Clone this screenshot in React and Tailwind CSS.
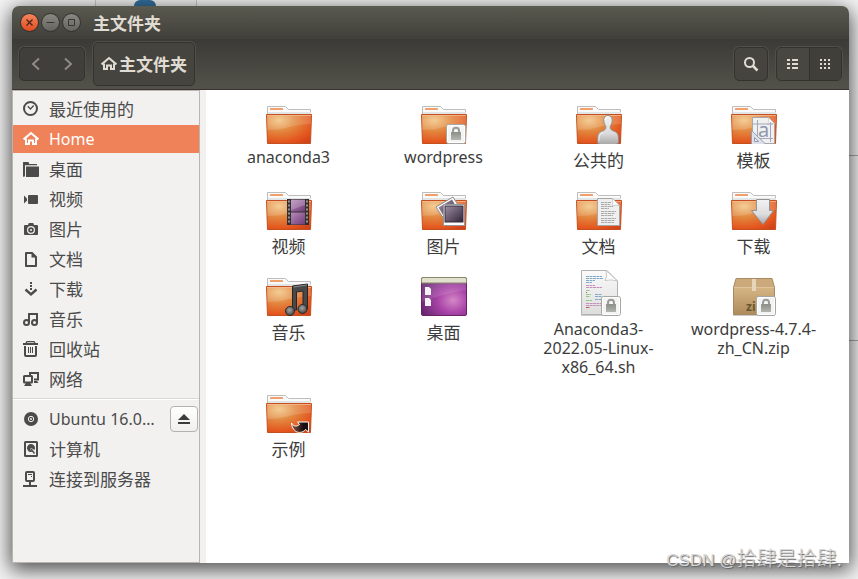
const CJK = "font-['Noto_Sans','Noto_Sans_CJK_SC',sans-serif]";

function HomeIcon() {
  return (
    <svg width="16" height="16" viewBox="0 0 16 16" fill="none" stroke="currentColor" strokeWidth="2">
      <path d="M.6 8.4 8 2l7.400 6.400" />
      <path d="M3 7.500V13h3V9.500h4V13h3V7.500" />
    </svg>
  );
}

const placeIcons = {
  recent: (
    <g fill="none" stroke="currentColor">
      <circle cx="7.500" cy="7.500" r="6.500" strokeWidth="2" />
      <path d="M4.800 5.200 7.500 8l3.200-3.500" strokeWidth="1.300" />
    </g>
  ),
  desktop: (
    <g fill="currentColor">
      <path d="M0 1.500Q0 1 .5 1H5.500l.8 2H14v1.200H2V15H0Z" />
      <path d="M3 5.500h13V15q0 1-1 1H3Z" />
      <path d="M0 14h1.500v2H1q-1 0-1-1Z" />
    </g>
  ),
  video: (
    <g fill="currentColor">
      <rect x="5" y="4" width="10" height="9" rx="1" />
      <path d="M1 4.500 4 7.500v2L1 12.500Z" />
    </g>
  ),
  camera: (
    <g fill="currentColor">
      <path fillRule="evenodd" d="M2 4h3l.8-2h4.400L11 4h3q1 0 1 1v8q0 1-1 1H2q-1 0-1-1V5q0-1 1-1ZM8 5a4 4 0 1 0 0 8 4 4 0 0 0 0-8Z" />
      <path fillRule="evenodd" d="M8 6.200a2.800 2.800 0 1 0 0 5.600 2.800 2.800 0 0 0 0-5.600ZM8 8a1 1 0 1 1 0 2 1 1 0 0 1 0-2Z" />
    </g>
  ),
  document: (
    <g>
      <path d="M3 2h6l4 4v9H3Z" fill="none" stroke="currentColor" strokeWidth="2" strokeLinejoin="round" />
      <path d="M8.500 2v4.500H13Z" fill="currentColor" />
    </g>
  ),
  download: (
    <g fill="none" stroke="currentColor" strokeWidth="2">
      <path d="M8 1v2M8 4v2M8 7v2" />
      <path d="M2.500 8.500 8 13.500l5.500-5" strokeWidth="2.400" />
    </g>
  ),
  music: (
    <g fill="none" stroke="currentColor" strokeWidth="2">
      <circle cx="3.500" cy="11.500" r="2.500" />
      <circle cx="11.500" cy="11.500" r="2.500" />
      <path d="M6 11.500V3h8v8.500" />
    </g>
  ),
  trash: (
    <g fill="none" stroke="currentColor">
      <path d="M0 3h15" strokeWidth="2" />
      <path d="M3 2 4 .700h7L12 2" strokeWidth="1.300" />
      <path d="M2 5v9q0 1 1 1h9q1 0 1-1V5" strokeWidth="2" />
      <path d="M5.500 6v6M7.500 6v6M9.500 6v6" />
    </g>
  ),
  network: (
    <g>
      <path d="M7 4V2h8v6.500h-4" fill="none" stroke="currentColor" strokeWidth="2" />
      <path d="M11 10h3l1.500 2H11Z" fill="currentColor" />
      <rect x="1" y="5" width="8" height="6.500" rx=".5" fill="none" stroke="currentColor" strokeWidth="2" />
      <path d="M3 12h4l2 3H1Z" fill="currentColor" />
    </g>
  ),
  disc: (
    <g>
      <circle cx="8" cy="8" r="7" fill="currentColor" />
      <circle cx="8" cy="8" r="2.700" fill="none" stroke="#f2f1f0" strokeWidth="1" />
      <circle cx="8" cy="8" r="1" fill="#f2f1f0" />
    </g>
  ),
  computer: (
    <g>
      <rect x="2" y="1" width="12" height="14" rx=".5" fill="none" stroke="currentColor" strokeWidth="2" />
      <path d="M8 3a4 4 0 1 0 1.200 7.800L7 8.200 8.200 7 11.500 9A4 4 0 0 0 8 3Z" fill="currentColor" />
      <path d="m8 8 3.500 4.500" stroke="currentColor" strokeWidth="1.500" />
    </g>
  ),
  server: (
    <g fill="none" stroke="currentColor" strokeWidth="2">
      <rect x="3" y="1" width="8" height="9" rx="1" />
      <path d="M7 10v5M0 15h14" />
      <path d="M5 3.500h4M8 5.500h1" strokeWidth="1" />
    </g>
  ),
};

const places = [
  { name: "最近使用的", icon: "recent" },
  { name: "Home", icon: "home", active: true },
  { name: "桌面", icon: "desktop" },
  { name: "视频", icon: "video" },
  { name: "图片", icon: "camera" },
  { name: "文档", icon: "document" },
  { name: "下载", icon: "download" },
  { name: "音乐", icon: "music" },
  { name: "回收站", icon: "trash" },
  { name: "网络", icon: "network" },
];

const devices = [
  { name: "Ubuntu 16.0…", icon: "disc", eject: true },
  { name: "计算机", icon: "computer" },
  { name: "连接到服务器", icon: "server" },
];

function isLatin(name) {
  return !/[\u4e00-\u9fff]/.test(name);
}

function Place({ place }) {
  return (
    <li className={`flex h-7 items-center ${place.active ? "bg-[#f08259] text-white" : "text-[#4b4b4b]"}`}>
      <a href="#" className="flex min-w-0 flex-1 items-center gap-[10px] pl-[10px]">
        {place.icon === "home" ? (
          <HomeIcon />
        ) : (
          <svg width="16" height="16" viewBox="0 0 16 16" className="shrink-0">
            {placeIcons[place.icon]}
          </svg>
        )}
        <span className={`leading-6 whitespace-nowrap ${isLatin(place.name) ? "text-[16px]" : "pt-[2px] text-[17px]"}`}>{place.name}</span>
      </a>
      {place.eject && (
        <button
          aria-label="弹出"
          className="mr-px flex h-[26px] w-7 shrink-0 items-center justify-center rounded border border-[#b5b2ae] bg-linear-to-b from-white to-[#f0efed]"
        >
          <svg width="12" height="12" viewBox="0 0 12 12" fill="#3c3c3c">
            <path d="M6 1 12 7H0Z" />
            <path d="M0 9h12v2H0Z" />
          </svg>
        </button>
      )}
    </li>
  );
}

// emblems share the 48px icon's coordinates
function Lock() {
  return (
    <g>
      <rect x="26.500" y="24.500" width="19" height="19" rx="2" fill="#f4f4f4" stroke="#a5a5a2" />
      <rect x="27.500" y="25.500" width="17" height="17" rx="1" fill="none" stroke="#fff" />
      <path d="M33 33v-2.200a3 3 0 0 1 6 0V33" fill="none" stroke="#999b96" strokeWidth="2" />
      <rect x="31" y="32" width="10" height="8" rx=".5" fill="url(#lock)" />
    </g>
  );
}

const emblems = {
  lock: <Lock />,
  person: (
    <g fill="url(#silver)" stroke="#90908e">
      <path d="M33 15.500c-3 0-4.500 2.500-4.200 5.500.2 2.600 1.400 4 2 5.500.3 2.500-.8 3.500-3.300 4.500-3.500 1.300-5 3-5 8v3.500c0 1.500 4 2.500 10.500 2.500s10.500-1 10.500-2.500V39c0-5-1.500-6.700-5-8-2.500-1-3.600-2-3.300-4.500.6-1.500 1.800-2.900 2-5.500.3-3-1.200-5.500-4.200-5.500Z" />
      <path d="M24 41v-2c0-4 1.500-5.500 4-6.500M30 20c0-2 1-3.500 3-3.500" fill="none" stroke="#fff" strokeOpacity=".7" />
    </g>
  ),
  template: (
    <g>
      <path d="M22.500 17.500h16l6 6v20h-22Z" fill="#f0f0f0" stroke="#a7a7a7" />
      <path d="M38.500 17.500q1 5-1 6.500 4-1 7-.5Z" fill="#fff" stroke="#c2c2c2" strokeWidth=".7" />
      <path d="M27.500 20v20M40.500 22v20M23 24h20M27 38.500h16" stroke="#a2a8bb" />
      <text x="28" y="37" fill="#8f97ad" fontSize="20" fontFamily="Noto Sans">a</text>
      <path fillRule="evenodd" d="M21.500 30.500 36 44.500H21.500ZM24.500 37.500v4h4Z" fill="#dce0ea" stroke="#969caf" />
    </g>
  ),
  film: (
    <g>
      <rect x="22" y="13" width="22" height="26" fill="#32302f" />
      <rect x="26" y="13.500" width="14" height="12" fill="url(#frame)" />
      <rect x="26" y="26.500" width="14" height="12" fill="url(#frame)" />
      <path d="M24 14.500v24M42 14.500v24" stroke="#969492" strokeWidth="2" strokeDasharray="2 2" />
      <path d="M26 14h14v5L26 24Z" fill="#fff" opacity=".2" />
    </g>
  ),
  photos: (
    <g>
      <path d="m16 21 17-10 12 19-17 9Z" fill="#fff" stroke="#8c8c8c" />
      <path d="m18.500 21.500 13.500-8 8 14-13 8Z" fill="url(#photo)" />
      <rect x="23.500" y="18.500" width="21" height="21" fill="#fff" stroke="#979797" />
      <rect x="25" y="20" width="18" height="16" fill="url(#photo)" stroke="#312c3c" />
    </g>
  ),
  text: (
    <g>
      <path d="M22.500 12.500h15l7 7v20h-22Z" fill="#efefef" stroke="#a5a5a5" />
      <path d="M37.500 12.500q1 5-.5 7.500 4-1.500 7.500-.5Z" fill="#fff" stroke="#bbb" strokeWidth=".7" />
      <path d="M26 16.500h10M26 18.500h9M26 20.500h12M26 22.500h8M26 25.500h15M26 27.500h14M26 29.500h12M26 32.500h15M26 34.500h14M26 36.500h13" stroke="#aaa" strokeDasharray="3 .5" />
    </g>
  ),
  arrow: <path d="M26.500 13.500h13v11h4L33 38.500 21.500 24.500h5Z" fill="url(#silver)" stroke="#929292" />,
  notes: (
    <g>
      <path d="M27.500 38V14l15-2v25H38V19l-6.500 1V38Z" fill="#494949" stroke="#272727" />
      <path d="M28.500 15 42 13" stroke="#8a8a8a" />
      <circle cx="25" cy="39" r="4.500" fill="url(#note)" stroke="#292929" />
      <circle cx="37.500" cy="37" r="4.500" fill="url(#note)" stroke="#292929" />
    </g>
  ),
  link: (
    <path d="M26.500 34c2 3.500 5 4 8 1.500L32.500 33H43.500v10l-3-2.500c-4 5-13 4-14-6.500Z" fill="url(#linkArrow)" stroke="#fff" strokeWidth="1" />
  ),
};

function Folder({ emblem }) {
  return (
    <>
      <path d="M2 44.500h44" stroke="#000" strokeOpacity=".13" />
      <path d="M2.500 15V6.500h18L23.500 9.500h22V15Z" fill="#fafafa" stroke="#bdbdbd" />
      <rect x="5" y="8" width="13" height="2" rx=".5" fill="#f0a06c" />
      <path d="M3 12h43v2H3Z" fill="#e2e5e6" />
      <path d="M1.500 14.500h45L45.500 43.500h-43Z" fill="url(#folder)" stroke="#c4501f" />
      <path d="M2 15h44v9q-16 1-24 3.500T2 30Z" fill="#fff" opacity=".14" />
      <path d="M2 15.500h44" stroke="#f6bd94" strokeOpacity=".75" />
      {emblems[emblem]}
    </>
  );
}

function Desktop() {
  return (
    <>
      <path d="M3 44.500h42" stroke="#000" strokeOpacity=".12" />
      <rect x="1.500" y="5.500" width="45" height="38" rx="1.500" fill="url(#desk)" stroke="#6c2066" />
      <path d="M2 11h44v7Q22 22 2 30Z" fill="#fff" opacity=".12" />
      <path d="M1.500 11V7q0-1.500 1.500-1.500h42q1.500 0 1.500 1.500v4Z" fill="#e2e1cf" stroke="#8b8867" />
      <path d="M5 15h4l2 2v6H5ZM5 26h4l2 2v6H5Z" fill="#f4f2f6" />
    </>
  );
}

function Script() {
  return (
    <>
      <path d="M6 43.500h37" stroke="#000" strokeOpacity=".2" />
      <path d="M6.500-1.500H32L42.500 9v33.500h-36Z" fill="url(#paper)" stroke="#b1b1b1" />
      <path d="M31-1.500q2 6-1 10 6-1.500 12.500.5Z" fill="#fff" stroke="#bcbcbc" strokeWidth=".8" />
      <g strokeDasharray="3 .5">
        <path d="M11 4.500h16M11 6.500h17M11 8.500h9M11 10.500h6M20 22.500h7M20 24.500h7M20 27.500h6" stroke="#82aac6" />
        <path d="M11 13.500h9M11 15.500h16M11 31.500h20M11 33.500h15" stroke="#c591bc" />
        <path d="M11 18.500h4M11 22.500h5M11 24.500h4M11 28.500h6" stroke="#8bcb82" />
        <path d="M11 20.500h1M11 35.500h4" stroke="#c95757" />
      </g>
      <Lock />
    </>
  );
}

function Zip() {
  return (
    <>
      <path d="M3 43.500h42" stroke="#000" strokeOpacity=".2" strokeWidth="2" />
      <path d="M6 6.500h36l2.500 9h-41Z" fill="#cba97b" stroke="#a68a62" />
      <path d="M3.500 15.500h41v27h-41Z" fill="url(#box)" stroke="#a68a62" />
      <path d="M4 15.500h40" stroke="#e0c59c" />
      <path d="M22 7h4v12h-4Z" fill="#e6d5b9" />
      <text x="16" y="39" fill="#69552f" fontSize="12" fontWeight="bold" fontFamily="Noto Sans">zip</text>
      <Lock />
    </>
  );
}

const files = [
  { name: "anaconda3", icon: <Folder /> },
  { name: "wordpress", icon: <Folder emblem="lock" /> },
  { name: "公共的", icon: <Folder emblem="person" /> },
  { name: "模板", icon: <Folder emblem="template" /> },
  { name: "视频", icon: <Folder emblem="film" /> },
  { name: "图片", icon: <Folder emblem="photos" /> },
  { name: "文档", icon: <Folder emblem="text" /> },
  { name: "下载", icon: <Folder emblem="arrow" /> },
  { name: "音乐", icon: <Folder emblem="notes" /> },
  { name: "桌面", icon: <Desktop /> },
  { name: "Anaconda3-\n2022.05-Linux-\nx86_64.sh", icon: <Script /> },
  { name: "wordpress-4.7.4-\nzh_CN.zip", icon: <Zip /> },
  { name: "示例", icon: <Folder emblem="link" /> },
];

function Gradients() {
  return (
    <svg width="0" height="0" className="absolute">
      <defs>
        <radialGradient id="folder" cx=".28" cy=".2" r=".95">
          <stop offset="0" stopColor="#f2c583" />
          <stop offset=".4" stopColor="#e2873f" />
          <stop offset=".8" stopColor="#e4551e" />
          <stop offset="1" stopColor="#d2441a" />
        </radialGradient>
        <radialGradient id="desk" cx=".7" cy=".6" r=".75">
          <stop offset="0" stopColor="#d488c6" />
          <stop offset=".45" stopColor="#a943a8" />
          <stop offset="1" stopColor="#64276f" />
        </radialGradient>
        <linearGradient id="lock" x2="0" y2="1">
          <stop offset="0" stopColor="#8b8f88" />
          <stop offset="1" stopColor="#b3b5af" />
        </linearGradient>
        <linearGradient id="silver" x2="0" y2="1">
          <stop offset="0" stopColor="#f3f3f3" />
          <stop offset=".6" stopColor="#dcdcdc" />
          <stop offset="1" stopColor="#a5a5a5" />
        </linearGradient>
        <linearGradient id="frame" x2="1" y2="1">
          <stop offset="0" stopColor="#b68bba" />
          <stop offset="1" stopColor="#713b78" />
        </linearGradient>
        <linearGradient id="photo" x2="1" y2="1">
          <stop offset="0" stopColor="#a28fa4" />
          <stop offset="1" stopColor="#2f2338" />
        </linearGradient>
        <radialGradient id="note" cx=".45" cy=".4" r=".6">
          <stop offset="0" stopColor="#a5a5a5" />
          <stop offset="1" stopColor="#454545" />
        </radialGradient>
        <linearGradient id="linkArrow">
          <stop offset="0" stopColor="#8e5140" />
          <stop offset=".7" stopColor="#171111" />
        </linearGradient>
        <linearGradient id="paper" x2="0" y2="1">
          <stop offset="0" stopColor="#fafafa" />
          <stop offset="1" stopColor="#dddddd" />
        </linearGradient>
        <linearGradient id="box" x2="0" y2="1">
          <stop offset="0" stopColor="#d6b584" />
          <stop offset="1" stopColor="#ad8b5b" />
        </linearGradient>
      </defs>
    </svg>
  );
}

function TitleBar() {
  const round = "flex size-[19px] items-center justify-center rounded-full border border-[#33322e]";
  return (
    <div className="flex h-[33px] items-center gap-[2px] bg-linear-to-b from-[#5b5a50] to-[#403f3a] pl-2">
      <button aria-label="关闭" className={`${round} bg-linear-to-b from-[#f4845c] to-[#df4c1c]`}>
        <svg width="9" height="9" viewBox="0 0 9 9" stroke="#4a2317" strokeWidth="1.300"><path d="m1.500 1.500 6 6M7.500 1.500l-6 6" /></svg>
      </button>
      <button aria-label="最小化" className={`${round} bg-linear-to-b from-[#8a8881] to-[#656460]`}>
        <svg width="9" height="9" viewBox="0 0 9 9" stroke="#383733"><path d="M.5 4.500h8" /></svg>
      </button>
      <button aria-label="最大化" className={`${round} bg-linear-to-b from-[#8a8881] to-[#656460]`}>
        <svg width="9" height="9" viewBox="0 0 9 9" fill="none" stroke="#383733"><path d="M1.500 1.500h6v6h-6Z" /></svg>
      </button>
      <h1 className="ml-[10px] pt-[2px] text-[17px] leading-6 font-bold text-[#e0dcd3]">主文件夹</h1>
    </div>
  );
}

function Toolbar() {
  const box = "rounded-[5px] border border-[#33322e] shadow-[0_0_0_1px_#504f48]";
  return (
    <div className="flex h-[51px] items-center gap-2 border-b border-[#3b3230] bg-linear-to-b from-[#3b3a36] to-[#53524a] px-[7px] text-[#e0dcd3]">
      <div className={`flex h-[34px] w-[66px] bg-[#403f3b] text-[#8f8c84] ${box}`}>
        <button aria-label="后退" className="flex flex-1 items-center justify-center">
          <svg width="10" height="14" viewBox="0 0 10 14" fill="none" stroke="currentColor" strokeWidth="2"><path d="M8 1.500 2 7l6 5.500" /></svg>
        </button>
        <button aria-label="前进" className="flex flex-1 items-center justify-center">
          <svg width="10" height="14" viewBox="0 0 10 14" fill="none" stroke="currentColor" strokeWidth="2"><path d="m2 1.500 6 5.500-6 5.500" /></svg>
        </button>
      </div>
      <button className={`flex h-11 items-center gap-[2px] bg-[#45443f] px-[7px] text-[17px] font-bold ${box}`}>
        <HomeIcon />
        <span className="pt-[2px]">主文件夹</span>
      </button>
      <button aria-label="搜索" className={`ml-auto flex size-[34px] items-center justify-center bg-[#45443f] ${box}`}>
        <svg width="16" height="16" viewBox="0 0 16 16" fill="none" stroke="currentColor" strokeWidth="2">
          <circle cx="6.500" cy="6.500" r="4.500" />
          <path d="m9.500 9.500 5 5" strokeWidth="2.500" />
        </svg>
      </button>
      <div className={`flex h-[34px] w-[66px] overflow-hidden bg-[#484741] ${box}`}>
        <button aria-label="列表视图" className="flex flex-1 items-center justify-center">
          <svg width="11" height="10" viewBox="0 0 11 10" fill="currentColor">
            <path d="M0 0h3v2H0ZM5 0h6v2H5ZM0 4h3v2H0ZM5 4h6v2H5ZM0 8h3v2H0ZM5 8h6v2H5Z" />
          </svg>
        </button>
        <button aria-label="图标视图" className="flex flex-1 items-center justify-center border-l border-[#33322e] bg-[#403f3a]">
          <svg width="10" height="10" viewBox="0 0 10 10" fill="currentColor">
            <path d="M0 0h2v2H0ZM4 0h2v2H4ZM8 0h2v2H8ZM0 4h2v2H0ZM4 4h2v2H4ZM8 4h2v2H8ZM0 8h2v2H0ZM4 8h2v2H4ZM8 8h2v2H8Z" />
          </svg>
        </button>
      </div>
    </div>
  );
}

export default function App() {
  return (
    <div className={`relative flex min-h-screen overflow-hidden bg-[#f4f4f4] pt-[6px] pr-[9px] pb-4 pl-3 ${CJK}`}>
      <Gradients />
      <div className="absolute top-0 left-[95px] h-2 w-[102px] border-x border-[#c9c9c9] bg-[#f0f0f0]" />
      <div className="absolute top-0 left-[134px] h-[6px] w-[22px] rounded-t-lg bg-[#33709f]" />
      <div className="absolute top-[155px] right-0 h-[186px] w-3 border-y border-[#a8a8a8]" />

      <main className="relative flex min-w-0 flex-1 flex-col rounded-t-lg shadow-[0_5px_20px_2px_rgba(0,0,0,0.68)]">
        <header className="overflow-hidden rounded-t-[7px]">
          <TitleBar />
          <Toolbar />
        </header>
        <div className="flex flex-1 bg-[#f2f1f0]">
          <nav className="w-[188px] shrink-0 border border-[#b9b6b2] pt-1">
            <ul className="flex flex-col gap-[2px]">
              {places.map((p) => (
                <Place key={p.name} place={p} />
              ))}
            </ul>
            <hr className="mt-[5px] mb-[5px] h-[2px] border-t border-b border-t-[#d9d7d4] border-b-white" />
            <ul className="flex flex-col gap-[2px]">
              {devices.map((p) => (
                <Place key={p.name} place={p} />
              ))}
            </ul>
          </nav>
          <ul className="ml-[6px] grid flex-1 grid-cols-[repeat(auto-fill,155px)] content-start gap-y-2 bg-white pt-[6px] pl-[5px]">
            {files.map((file, i) => (
              <li key={i}>
                <a href="#" className="flex flex-col items-center gap-1 text-center text-[#3c3c3c]">
                  <svg width="48" height="48" viewBox="0 -4 48 48">{file.icon}</svg>
                  <span className={`whitespace-pre ${isLatin(file.name) ? "min-h-[26px] text-[16px] leading-[19px]" : "text-[17px] leading-[26px]"}`}>
                    {file.name}
                  </span>
                </a>
              </li>
            ))}
          </ul>
        </div>
      </main>

      <p className="absolute right-4 bottom-1 font-['Liberation_Sans','Noto_Sans_CJK_SC',sans-serif] text-[20px] leading-7 font-light text-[#d6d6d6] [text-shadow:1px_1px_1px_#666]">
        <span className="text-[17px]">CSDN @</span>拾肆是拾肆.
      </p>
    </div>
  );
}
